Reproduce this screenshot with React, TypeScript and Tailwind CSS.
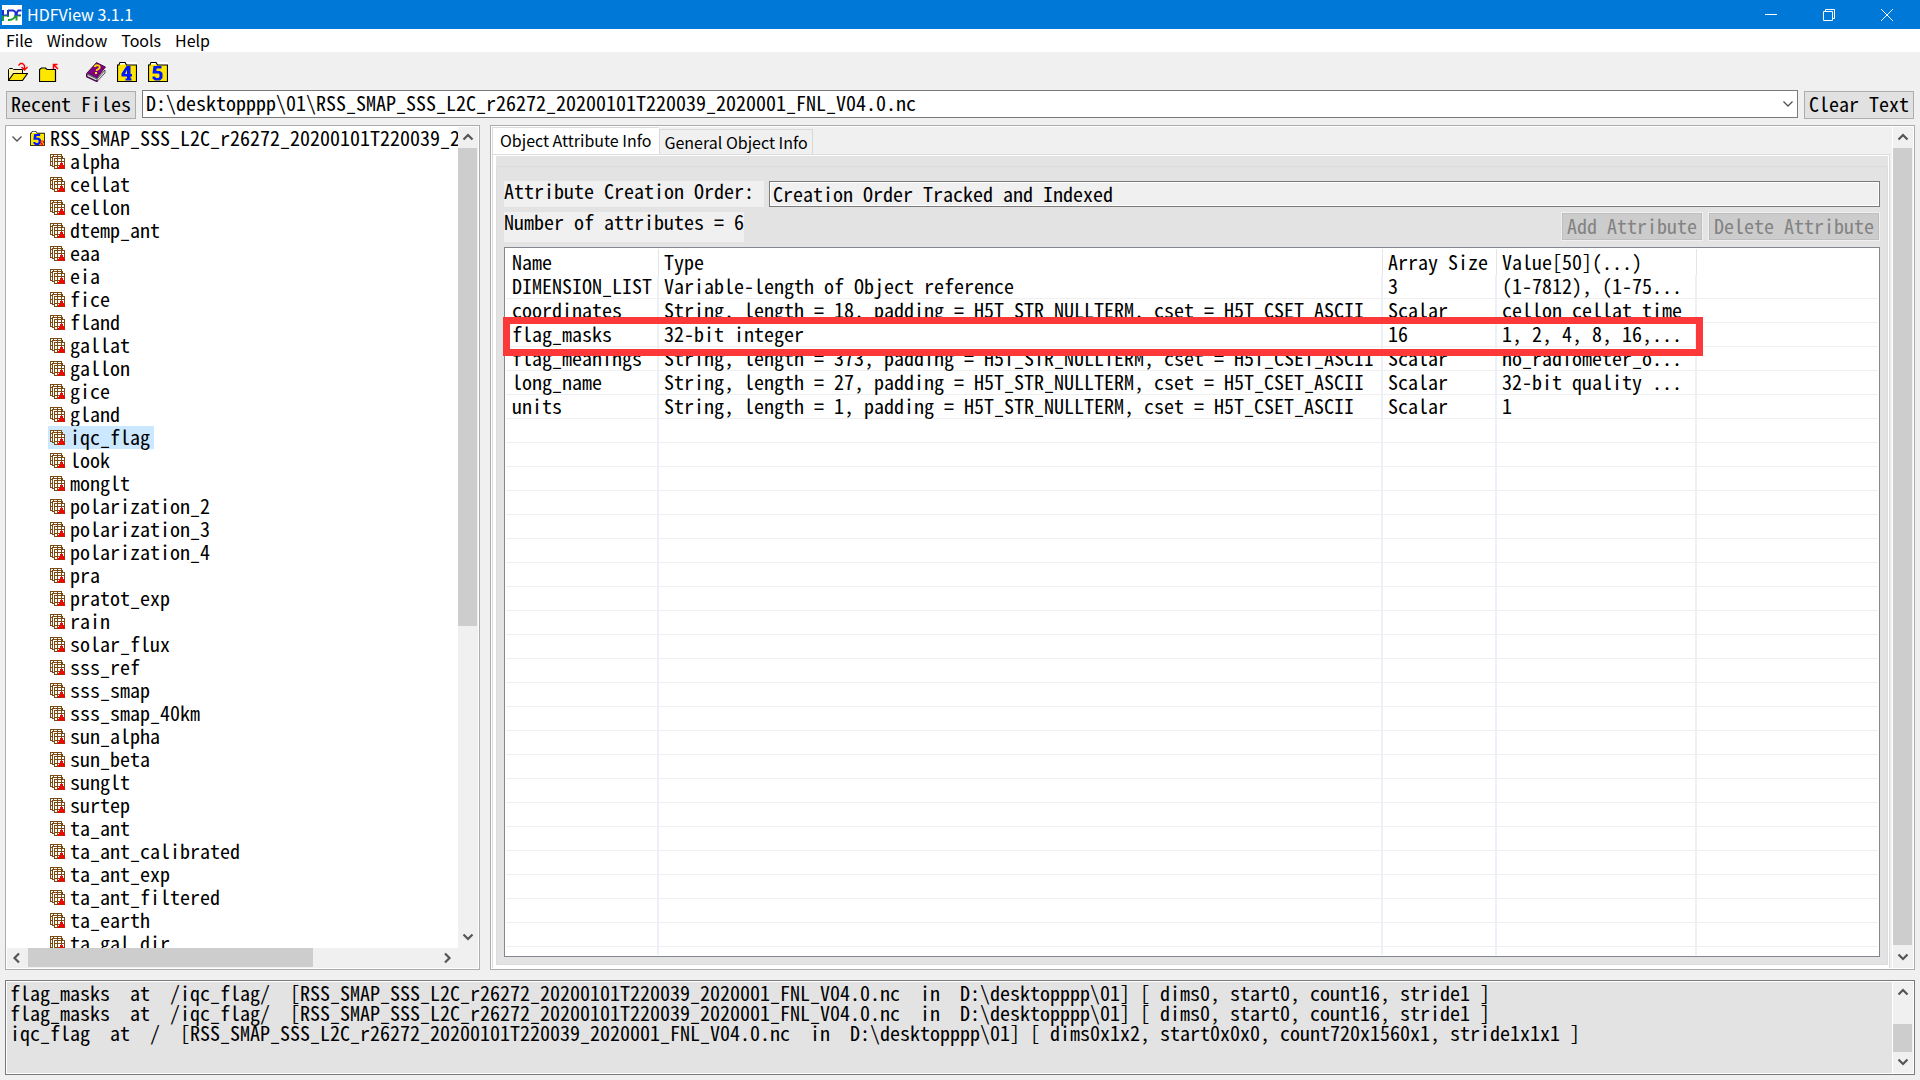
import type { ReactNode } from 'react';
import clsx from 'clsx';

const FILE_NAME = 'RSS_SMAP_SSS_L2C_r26272_20200101T220039_2020001_FNL_V04.0.nc';
const FILE_PATH = `D:\\desktopppp\\01\\${FILE_NAME}`;

const DATASETS = [
  'alpha', 'cellat', 'cellon', 'dtemp_ant', 'eaa', 'eia', 'fice', 'fland', 'gallat', 'gallon',
  'gice', 'gland', 'iqc_flag', 'look', 'monglt', 'polarization_2', 'polarization_3',
  'polarization_4', 'pra', 'pratot_exp', 'rain', 'solar_flux', 'sss_ref', 'sss_smap',
  'sss_smap_40km', 'sun_alpha', 'sun_beta', 'sunglt', 'surtep', 'ta_ant', 'ta_ant_calibrated',
  'ta_ant_exp', 'ta_ant_filtered', 'ta_earth', 'ta_gal_dir',
];

const ATTRIBUTES = [
  ['DIMENSION_LIST', 'Variable-length of Object reference', '3', '(1-7812), (1-75...'],
  ['coordinates', 'String, length = 18, padding = H5T_STR_NULLTERM, cset = H5T_CSET_ASCII', 'Scalar', 'cellon cellat time'],
  ['flag_masks', '32-bit integer', '16', '1, 2, 4, 8, 16,...'],
  ['flag_meanings', 'String, length = 373, padding = H5T_STR_NULLTERM, cset = H5T_CSET_ASCII', 'Scalar', 'no_radiometer_o...'],
  ['long_name', 'String, length = 27, padding = H5T_STR_NULLTERM, cset = H5T_CSET_ASCII', 'Scalar', '32-bit quality ...'],
  ['units', 'String, length = 1, padding = H5T_STR_NULLTERM, cset = H5T_CSET_ASCII', 'Scalar', '1'],
];

const EMPTY_ROWS = Array.from({ length: 23 }, () => ['', '', '', '']);

const LOG = [
  `flag_masks  at  /iqc_flag/  [${FILE_NAME}  in  D:\\desktopppp\\01] [ dims0, start0, count16, stride1 ]`,
  `flag_masks  at  /iqc_flag/  [${FILE_NAME}  in  D:\\desktopppp\\01] [ dims0, start0, count16, stride1 ]`,
  `iqc_flag  at  /  [${FILE_NAME}  in  D:\\desktopppp\\01] [ dims0x1x2, start0x0x0, count720x1560x1, stride1x1x1 ]`,
].join('\n');

/* ---------- icons ---------- */

function HdfLogo() {
  return (
    <svg width="20" height="20" viewBox="0 0 20 20" aria-hidden="true">
      <defs>
        <linearGradient id="hdf" x1="0" y1="0" x2="0" y2="1">
          <stop offset="0.45" stopColor="#1c2fd0" />
          <stop offset="0.55" stopColor="#1f9a2c" />
        </linearGradient>
      </defs>
      <rect width="20" height="20" fill="#fff" />
      <g fill="none" stroke="url(#hdf)" strokeWidth="2">
        <path d="M1 5v11M1 10.500h5M6 5v7M6 5.500h5q4 1 2 6q-1 3-6 3.500h-1M14.500 15.500v-4q0-5 2-6h3M14 10.500h5" />
      </g>
    </svg>
  );
}

function OpenFolderIcon() {
  return (
    <svg width="20" height="20" viewBox="0 0 20 20" aria-hidden="true">
      <path d="M.5 18.500v-11l1-1h3l1 1h9v4" fill="#fff2a0" stroke="#000" />
      <path d="M.5 18.500l5-7h14l-5 7z" fill="#ffe600" stroke="#000" strokeWidth="1.200" />
      <path d="M10.500 3.500l2-2h2l2 2v4M13.500 5l3 3l3-3" fill="none" stroke="#f00" strokeWidth="1.400" />
    </svg>
  );
}

function CloseFolderIcon() {
  return (
    <svg width="20" height="20" viewBox="0 0 20 20" aria-hidden="true">
      <path d="M.5 19.500v-12l2-1.500h4l1.500 1.500h8.500v12z" fill="#ffe600" stroke="#000" strokeWidth="1.200" />
      <path d="M14.500 7v-4.500h4M14.500 2.500l4.500 4.500" fill="none" stroke="#f00" strokeWidth="1.600" />
    </svg>
  );
}

function BookIcon() {
  return (
    <svg width="20" height="20" viewBox="0 0 20 20" aria-hidden="true">
      <path d="M1 12l10 5l8-9v3l-8 8.500l-10-5z" fill="#d8d8d8" stroke="#333" strokeWidth=".8" />
      <path d="M1 11l9.500-10.500l9 4.500l-8.500 11z" fill="#800080" stroke="#3a003a" strokeWidth=".8" />
      <path d="M1 11.500q-1.500 2 0 3.500l10 4.500v-2" fill="none" stroke="#4b004b" strokeWidth="1.300" />
      <path d="M8.500 5q1-2.500 4-1.500q2.500 1.500 0 3.500q-2 .5-2 2" fill="none" stroke="#ffe600" strokeWidth="1.800" />
      <rect x="9" y="10" width="2" height="2" fill="#ffe600" />
    </svg>
  );
}

function HdfFolderIcon({ version, size = 20 }: { version: string; size?: number }) {
  return (
    <svg width={size} height={size} viewBox="0 0 20 20" aria-hidden="true">
      <rect x="9" width="11" height="3" fill="#fff" />
      <path d="M.5 19.500v-16.500h1.500l1-2.500h5l1.500 2.500h10v16.500z" fill="#ffe600" stroke="#000" strokeWidth="1.200" />
      <path d="M2.500 2.500l1-1.500h4l1 1.500z" fill="#fff" />
      {version === '4' ? (
        <path d="M9.500 4h4v8h1.500v2.500h-1.500v2h1v2h-6v-2h1.500v-2h-5.500v-3zM10 8l-2 4h2z" fill="#0018ff" fillRule="evenodd" />
      ) : (
        <path d="M5.500 4h8v2.500h-5v2.500h3.500l2.500 2v5l-2.500 2.500h-5l-2.500-2v-2h2.500l1 1.500h2.500l1-1.500v-2l-1-1h-6z" fill="#0018ff" />
      )}
    </svg>
  );
}

function RootIcon() {
  return (
    <span className="relative flex">
      <HdfFolderIcon version="5" size={15} />
      <svg className="absolute right-0 bottom-0" width="5" height="6" viewBox="0 0 5 6" aria-hidden="true">
        <path d="M1 6V1h2.500v2L1 3.500L4.500 6" fill="none" stroke="#f00" />
      </svg>
    </span>
  );
}

function DatasetIcon() {
  return (
    <svg width="15" height="15" viewBox="0 0 15 15" shapeRendering="crispEdges" aria-hidden="true">
      <g fill="#fff" stroke="#7b4a12">
        <path d="M.5.5h11v11h-11zM.5 3.500h11M.5 7.500h11M3.500.5v11M7.500.5v11" />
        <path d="M2.500 2.500h10v10h-10z" />
        <path d="M4.500 4.500h10v10h-10zM4.500 7.500h10M4.500 11.500h10M7.500 2.500v12M11.500 2.500v12" />
      </g>
      <path d="M8 15v-2h1v-2h1v-2h3v2h1v2h1v2h-2v-1h-3v1zM11 10h1v2h-1z" fill="#f00" fillRule="evenodd" />
    </svg>
  );
}

const ARROWS = {
  up: 'M5.500 12.500l4.500-4.500l4.500 4.500',
  down: 'M5.500 7.500l4.500 4.500l4.500-4.500',
  left: 'M12 5.500l-4.500 4.500l4.500 4.500',
  right: 'M8 5.500l4.500 4.500l-4.500 4.500',
};

function Arrow({ dir, thin }: { dir: keyof typeof ARROWS; thin?: boolean }) {
  return (
    <svg width="20" height="20" viewBox="0 0 20 20" aria-hidden="true">
      <path d={ARROWS[dir]} fill="none" stroke="#555" strokeWidth={thin ? 1.4 : 2.2} />
    </svg>
  );
}

/* ---------- small controls ---------- */

function VerticalScrollbar({ thumb, atEnd }: { thumb: number; atEnd?: boolean }) {
  return (
    <div className="flex w-5 shrink-0 flex-col bg-[#f0f0f0]">
      <button type="button" aria-label="Scroll up" className="flex h-[21px] shrink-0">
        <Arrow dir="up" />
      </button>
      <div className={clsx('flex min-h-0 flex-1 flex-col', atEnd && 'justify-end')}>
        <div className="w-[19px] bg-[#cdcdcd]" style={{ height: `${thumb}%` }} />
      </div>
      <button type="button" aria-label="Scroll down" className="flex h-[21px] shrink-0">
        <Arrow dir="down" />
      </button>
    </div>
  );
}

function PushButton({ children }: { children: ReactNode }) {
  return (
    <button type="button" className="h-7 shrink-0 border border-[#adadad] bg-[#e1e1e1] px-1 pb-0.5 whitespace-nowrap">
      {children}
    </button>
  );
}

function DisabledButton({ children }: { children: ReactNode }) {
  return (
    <button
      type="button"
      disabled
      className="h-[29px] border border-[#f0f0f0] bg-[#cccccc] px-[5px] pb-0.5 text-[#838383] inset-ring inset-ring-[#bfbfbf]"
    >
      {children}
    </button>
  );
}

/* ---------- window parts ---------- */

function TitleBar() {
  return (
    <header className="flex h-[29px] shrink-0 items-center bg-[#0078d7] pl-0.5 pr-1 text-white">
      <HdfLogo />
      <h1 className="ml-[5px] flex-1 pb-0.5">HDFView 3.1.1</h1>
      <button type="button" aria-label="Minimize" className="flex h-full w-[58px] items-center justify-center">
        <svg width="12" height="12" viewBox="0 0 12 12"><path d="M0 5.500h12" stroke="#fff" /></svg>
      </button>
      <button type="button" aria-label="Restore" className="flex h-full w-[58px] items-center justify-center">
        <svg width="12" height="12" viewBox="0 0 12 12" fill="none" stroke="#fff">
          <path d="M.5 2.500h9v9h-9zM2.500 2.500v-2h9v9h-2" />
        </svg>
      </button>
      <button type="button" aria-label="Close" className="flex h-full w-[58px] items-center justify-center">
        <svg width="12" height="12" viewBox="0 0 12 12"><path d="M0 0l12 12M12 0l-12 12" stroke="#fff" /></svg>
      </button>
    </header>
  );
}

function MenuBar() {
  return (
    <nav className="flex h-[23px] shrink-0 items-center gap-3.5 bg-white px-1.5 pb-px">
      {['File', 'Window', 'Tools', 'Help'].map((item) => (
        <button key={item} type="button">{item}</button>
      ))}
    </nav>
  );
}

function Toolbar() {
  return (
    <div className="flex h-[38px] shrink-0 items-start gap-[11px] px-2 pt-2.5">
      <button type="button" aria-label="Open"><OpenFolderIcon /></button>
      <button type="button" aria-label="Close" className="mr-4"><CloseFolderIcon /></button>
      <button type="button" aria-label="Help"><BookIcon /></button>
      <button type="button" aria-label="HDF4 library"><HdfFolderIcon version="4" /></button>
      <button type="button" aria-label="HDF5 library"><HdfFolderIcon version="5" /></button>
    </div>
  );
}

function TreePanel() {
  return (
    <aside className="flex w-1/4 shrink-0 flex-col pl-[5px]">
      <div className="flex min-h-0 flex-1 flex-col border border-[#acacb0] bg-white p-px">
        <div className="flex min-h-0 flex-1">
          <ul className="min-w-0 flex-1 overflow-hidden font-['Noto_Sans_Mono_CJK_SC','Liberation_Mono',monospace] text-xl/[22px] whitespace-nowrap">
            <li className="flex h-[23px]">
              <span className="mr-[3px] flex w-5 items-center"><Arrow dir="down" thin /></span>
              <span className="flex items-center"><RootIcon /></span>
              <span className="ml-[5px]">{FILE_NAME}</span>
            </li>
            {DATASETS.map((name) => (
              <li key={name} className="flex h-[23px] pl-[41px]">
                <span className={clsx('flex px-0.5', name === 'iqc_flag' && 'bg-[#cce8ff]')}>
                  <span className="mr-[5px] flex items-center"><DatasetIcon /></span>
                  <span className="pr-0.5">{name}</span>
                </span>
              </li>
            ))}
          </ul>
          <VerticalScrollbar thumb={61.4} />
        </div>
        <div className="flex h-5 shrink-0 bg-[#f0f0f0] pr-5">
          <button type="button" aria-label="Scroll left" className="w-[21px]"><Arrow dir="left" /></button>
          <div className="flex-1">
            <div className="h-[19px] bg-[#cdcdcd]" style={{ width: '69.7%' }} />
          </div>
          <button type="button" aria-label="Scroll right" className="w-[21px]"><Arrow dir="right" /></button>
        </div>
      </div>
    </aside>
  );
}

function AttributeTable() {
  return (
    <div className="relative mt-[5px] flex min-h-0 flex-1 flex-col border border-[#828790] bg-white p-px">
      <div className="min-h-0 flex-1 overflow-hidden">
        <table className="w-full table-fixed border-separate border-spacing-0 text-left">
          <colgroup>
            <col className="w-[153px]" />
            <col className="w-[724px]" />
            <col className="w-[114px]" />
            <col className="w-[200px]" />
            <col />
          </colgroup>
          <thead>
            <tr>
              {['Name', 'Type', 'Array Size', 'Value[50](...)'].map((title) => (
                <th
                  key={title}
                  className="h-[26px] border-r border-[#e5e5e5] p-0 pt-[3px] pl-[5px] align-top font-normal whitespace-nowrap first:pl-1.5"
                >
                  {title}
                </th>
              ))}
              <td />
            </tr>
          </thead>
          <tbody>
            {[...ATTRIBUTES, ...EMPTY_ROWS].map((row, i) => (
              <tr key={i}>
                {row.map((cell, j) => (
                  <td
                    key={j}
                    className="h-6 border-r-2 border-b border-r-[#eef0f7] border-b-[#f0f0f0] p-0 pt-px pl-[5px] align-top whitespace-nowrap first:pl-1.5"
                  >
                    {cell}
                  </td>
                ))}
                <td className="border-b border-[#f0f0f0] p-0" />
              </tr>
            ))}
          </tbody>
        </table>
      </div>
      {/* highlight around flag_masks */}
      <div className="pointer-events-none absolute top-[69px] -left-0.5 h-[39px] w-[1200px] border-[7px] border-[#fd3838]" />
    </div>
  );
}

function InfoPanel() {
  return (
    <section className="mr-[5px] flex min-w-0 flex-1 border border-[#acacb0] bg-white p-px">
      <div className="mr-px flex min-w-0 flex-1 flex-col bg-[#f0f0f0] pr-0.5">
        <div role="tablist" className="flex h-[27px] shrink-0 items-end">
          <button
            type="button"
            role="tab"
            aria-selected="true"
            className="-mb-px h-7 border-t border-l border-[#dcdcdc] bg-white pr-2 pb-1 pl-[7px]"
          >
            Object Attribute Info
          </button>
          <button type="button" role="tab" aria-selected="false" className="h-[25px] border border-b-0 border-[#d9d9d9] px-1">
            General Object Info
          </button>
        </div>
        <div className="flex min-h-0 flex-1 flex-col border border-b-0 border-[#dcdcdc] bg-white pt-px pr-px pb-[3px] pl-[3px]">
          <div className="flex min-h-0 flex-1 flex-col bg-[#e3e3e3] pt-2.5">
            <div className="flex min-h-0 flex-1 flex-col border border-[#dcdcdc] px-[7px] pt-3.5 pb-[7px] font-['Noto_Sans_Mono_CJK_SC','Liberation_Mono',monospace] text-xl/5">
              <div className="flex h-[26px] shrink-0 gap-[5px]">
                <label htmlFor="creation-order" className="w-[260px] bg-[#f0f0f0]">
                  Attribute Creation Order:
                </label>
                <input
                  id="creation-order"
                  readOnly
                  value="Creation Order Tracked and Indexed"
                  className="min-w-0 flex-1 border border-[#7a7a7a] bg-[#f0f0f0] px-[3px] pb-0.5 inset-ring inset-ring-white outline-none"
                />
              </div>
              <div className="mt-[5px] flex h-[30px] shrink-0 items-start">
                <p className="h-full bg-[#f0f0f0]">Number of attributes = 6</p>
                <div className="ml-auto flex gap-[5px]">
                  <DisabledButton>Add Attribute</DisabledButton>
                  <DisabledButton>Delete Attribute</DisabledButton>
                </div>
              </div>
              <AttributeTable />
            </div>
          </div>
        </div>
      </div>
      <VerticalScrollbar thumb={99.8} />
    </section>
  );
}

export default function App() {
  return (
    <div className="flex h-screen flex-col overflow-hidden bg-[#f0f0f0] font-['Noto_Sans_CJK_SC',sans-serif] text-base/5 text-black">
      <TitleBar />
      <MenuBar />
      <Toolbar />

      <div className="flex h-[29px] shrink-0 items-start gap-1.5 px-1.5 font-['Noto_Sans_Mono_CJK_SC','Liberation_Mono',monospace] text-xl/5">
        <div className="flex pt-px">
          <PushButton>Recent Files</PushButton>
        </div>
        <div className="relative min-w-0 flex-1">
          <select
            aria-label="Recent files"
            className="h-7 w-full appearance-none border border-[#7a7a7a] bg-white pb-0.5 pl-[3px] leading-6 outline-none"
          >
            <option>{FILE_PATH}</option>
          </select>
          <span className="pointer-events-none absolute top-1 right-0">
            <Arrow dir="down" thin />
          </span>
        </div>
        <div className="flex pt-px">
          <PushButton>Clear Text</PushButton>
        </div>
      </div>

      <main className="mt-1.5 flex min-h-0 flex-1 gap-2.5">
        <TreePanel />
        <InfoPanel />
      </main>

      <footer className="mx-[5px] mt-2.5 mb-[5px] flex h-[95px] shrink-0 border border-[#7a7a7a] bg-white p-px">
        <textarea
          readOnly
          aria-label="Log"
          value={LOG}
          className="mr-px min-w-0 flex-1 resize-none overflow-hidden bg-[#e3e3e3] pt-px pl-[3px] font-['Noto_Sans_Mono_CJK_SC','Liberation_Mono',monospace] text-xl/5 whitespace-pre outline-none"
        />
        <VerticalScrollbar thumb={57} atEnd />
      </footer>
    </div>
  );
}
